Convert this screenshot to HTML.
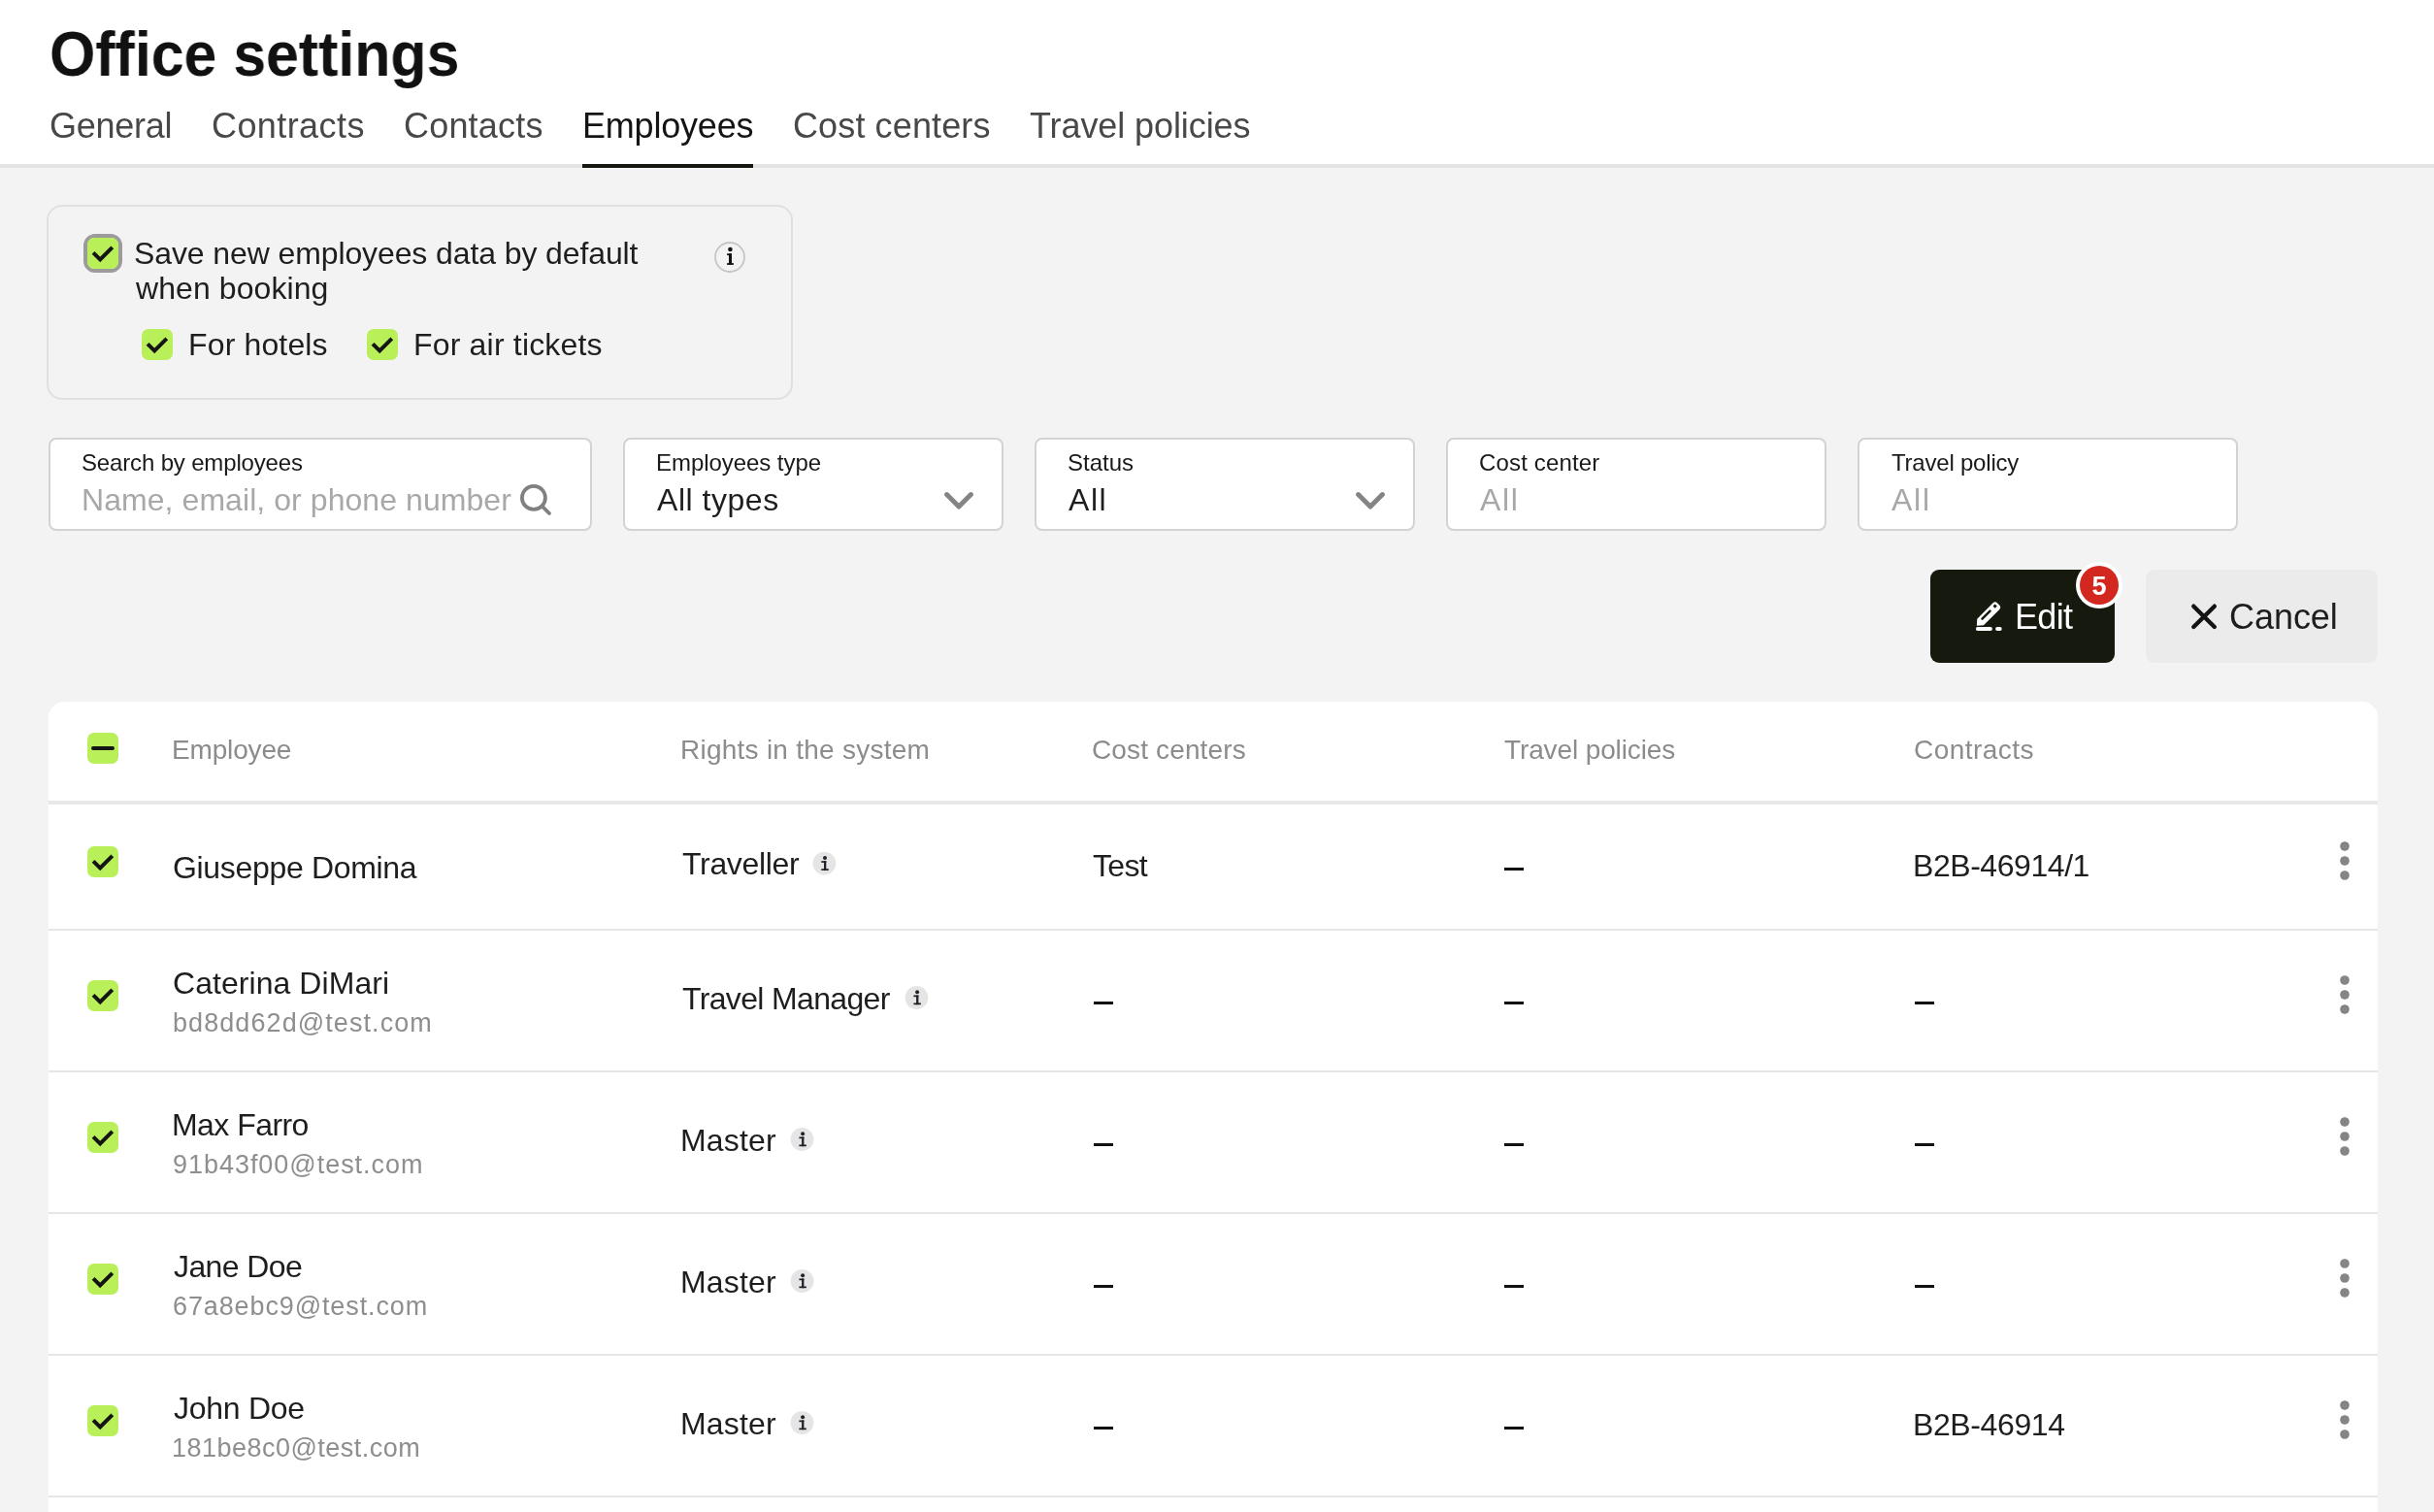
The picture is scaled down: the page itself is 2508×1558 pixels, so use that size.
<!DOCTYPE html>
<html><head><meta charset="utf-8"><style>
html,body{margin:0;padding:0;width:2508px;height:1558px;overflow:hidden;background:#f3f3f3;font-family:"Liberation Sans",sans-serif;}
.t{position:absolute;white-space:pre;font-family:"Liberation Sans",sans-serif;will-change:transform}
.a{position:absolute;box-sizing:border-box;}
svg{position:absolute;overflow:visible}
</style></head><body>
<div class=a style="left:0;top:0;width:2508px;height:169px;background:#fff"></div>
<div class=a style="left:0;top:169px;width:2508px;height:4px;background:#e3e3e3"></div>
<div class=a style="left:600px;top:169px;width:176px;height:4px;background:#141810"></div>
<div class=a style="left:48px;top:211px;width:769px;height:201px;border:2px solid #e0e0e0;border-radius:16px"></div>
<div class=a style="left:86px;top:241px;width:40px;height:40px;border:4px solid #9b9b9b;border-radius:12px"></div><svg style="left:90px;top:245px" width="32" height="32" viewBox="0 0 32 32"><rect width="32" height="32" rx="7" fill="#b9f05a"/><path d="M6.1 15.3 L13.2 22.4 L25.8 9.8" fill="none" stroke="#141414" stroke-width="3.9" stroke-linejoin="miter"/></svg>
<svg style="left:146px;top:339px" width="32" height="32" viewBox="0 0 32 32"><rect width="32" height="32" rx="7" fill="#b9f05a"/><path d="M6.1 15.3 L13.2 22.4 L25.8 9.8" fill="none" stroke="#141414" stroke-width="3.9" stroke-linejoin="miter"/></svg>
<svg style="left:378px;top:339px" width="32" height="32" viewBox="0 0 32 32"><rect width="32" height="32" rx="7" fill="#b9f05a"/><path d="M6.1 15.3 L13.2 22.4 L25.8 9.8" fill="none" stroke="#141414" stroke-width="3.9" stroke-linejoin="miter"/></svg>
<svg style="left:0;top:0" width="1" height="1"><circle cx="752" cy="265" r="15" fill="none" stroke="#c6c6c6" stroke-width="1.8"/><circle cx="752.4" cy="257" r="2.3" fill="#111"/><rect x="751" y="261.3" width="3" height="11" fill="#111"/><rect x="749.1" y="261.3" width="4.9" height="1.8" fill="#111"/><rect x="749.1" y="271.1" width="6.8" height="1.8" fill="#111"/></svg>
<div class=a style="left:50px;top:451px;width:560px;height:96px;background:#fff;border:2px solid #d3d3d3;border-radius:8px"></div>
<div class=a style="left:642px;top:451px;width:392px;height:96px;background:#fff;border:2px solid #d3d3d3;border-radius:8px"></div>
<div class=a style="left:1066px;top:451px;width:392px;height:96px;background:#fff;border:2px solid #d3d3d3;border-radius:8px"></div>
<div class=a style="left:1490px;top:451px;width:392px;height:96px;background:#fff;border:2px solid #d3d3d3;border-radius:8px"></div>
<div class=a style="left:1914px;top:451px;width:392px;height:96px;background:#fff;border:2px solid #d3d3d3;border-radius:8px"></div>
<svg style="left:0;top:0" width="1" height="1"><circle cx="549.9" cy="512.9" r="12" fill="none" stroke="#808080" stroke-width="3.8"/><path d="M558.6 521.6 L566 529" stroke="#808080" stroke-width="3.8" stroke-linecap="round"/></svg>
<svg style="left:0;top:0" width="1" height="1"><path d="M975.6 509.6 L988 522 L1000.4 509.6" fill="none" stroke="#848484" stroke-width="5" stroke-linecap="round" stroke-linejoin="round"/></svg>
<svg style="left:0;top:0" width="1" height="1"><path d="M1399.6 509.6 L1412 522 L1424.4 509.6" fill="none" stroke="#848484" stroke-width="5" stroke-linecap="round" stroke-linejoin="round"/></svg>
<div class=a style="left:1989px;top:587px;width:190px;height:96px;background:#161a0e;border-radius:9px"></div>
<div class=a style="left:2211px;top:587px;width:239px;height:96px;background:#ebebeb;border-radius:9px"></div>
<svg style="left:2025px;top:610px" width="50" height="50" viewBox="0 0 50 50"><g transform="translate(15.6 31) rotate(-45)"><path d="M0 -4.7 L22.8 -4.7 Q26.2 -4.7 26.2 -1.5 L26.2 1.5 Q26.2 4.7 22.8 4.7 L0 4.7 L-5.3 0 Z" fill="#fff"/><rect x="2.5" y="-2.3" width="13.8" height="2.5" rx="1.2" fill="#161a0e"/><rect x="20.8" y="-2.5" width="3" height="3" fill="#161a0e"/></g><rect x="10.9" y="36" width="17" height="4" rx="2" fill="#fff"/><rect x="31.1" y="36" width="6.6" height="4" rx="2" fill="#fff"/></svg>
<div class=a style="left:2139px;top:579px;width:48px;height:48px;border-radius:50%;background:#fff"></div>
<div class=a style="left:2143px;top:583px;width:40px;height:40px;border-radius:50%;background:#d3281f"></div>
<div class=t style="left:2143px;top:584px;width:40px;height:40px;line-height:40px;text-align:center;font-size:27px;font-weight:700;color:#fff">5</div>
<svg style="left:0;top:0" width="1" height="1"><path d="M2260.3 624.7 L2281.8 646 M2281.8 624.7 L2260.3 646" stroke="#141414" stroke-width="4.4" stroke-linecap="round"/></svg>
<div class=a style="left:50px;top:723px;width:2400px;height:900px;background:#fff;border-radius:16px"></div>
<div class=a style="left:50px;top:825px;width:2400px;height:4px;background:#e8e8e8"></div>
<div class=a style="left:50px;top:957.00px;width:2400px;height:2px;background:#e6e6e6"></div>
<div class=a style="left:50px;top:1103.00px;width:2400px;height:2px;background:#e6e6e6"></div>
<div class=a style="left:50px;top:1249.00px;width:2400px;height:2px;background:#e6e6e6"></div>
<div class=a style="left:50px;top:1395.00px;width:2400px;height:2px;background:#e6e6e6"></div>
<div class=a style="left:50px;top:1541.00px;width:2400px;height:2px;background:#e6e6e6"></div>
<svg style="left:90px;top:755px" width="32" height="32" viewBox="0 0 32 32"><rect width="32" height="32" rx="7" fill="#b9f05a"/><rect x="4" y="14.1" width="24" height="4" rx="2" fill="#141414"/></svg>
<svg style="left:90px;top:872px" width="32" height="32" viewBox="0 0 32 32"><rect width="32" height="32" rx="7" fill="#b9f05a"/><path d="M6.1 15.3 L13.2 22.4 L25.8 9.8" fill="none" stroke="#141414" stroke-width="3.9" stroke-linejoin="miter"/></svg>
<svg style="left:0;top:0" width="1" height="1"><circle cx="849.4" cy="889.7" r="11.9" fill="#e5e5e5"/><circle cx="850.0" cy="884.0" r="2" fill="#1e2127"/><rect x="849.0" y="887.2" width="2.3" height="9.7" fill="#1e2127"/><rect x="846.3" y="887.2" width="5" height="1.7" fill="#1e2127"/><rect x="846.3" y="895.2" width="7.5" height="1.7" fill="#1e2127"/></svg>
<div class=a style="left:1550.2px;top:894.10px;width:19.8px;height:2.8px;background:#111"></div>
<svg style="left:0;top:0" width="1" height="1"><circle cx="2416" cy="872" r="4.8" fill="#858585"/><circle cx="2416" cy="887" r="4.8" fill="#858585"/><circle cx="2416" cy="902" r="4.8" fill="#858585"/></svg>
<svg style="left:90px;top:1010px" width="32" height="32" viewBox="0 0 32 32"><rect width="32" height="32" rx="7" fill="#b9f05a"/><path d="M6.1 15.3 L13.2 22.4 L25.8 9.8" fill="none" stroke="#141414" stroke-width="3.9" stroke-linejoin="miter"/></svg>
<svg style="left:0;top:0" width="1" height="1"><circle cx="944.5" cy="1028" r="11.9" fill="#e5e5e5"/><circle cx="945.1" cy="1022.3" r="2" fill="#1e2127"/><rect x="944.1" y="1025.5" width="2.3" height="9.7" fill="#1e2127"/><rect x="941.4" y="1025.5" width="5" height="1.7" fill="#1e2127"/><rect x="941.4" y="1033.5" width="7.5" height="1.7" fill="#1e2127"/></svg>
<div class=a style="left:1127px;top:1032.05px;width:19.8px;height:2.8px;background:#111"></div>
<div class=a style="left:1550px;top:1032.05px;width:19.8px;height:2.8px;background:#111"></div>
<div class=a style="left:1973px;top:1032.05px;width:19.8px;height:2.8px;background:#111"></div>
<svg style="left:0;top:0" width="1" height="1"><circle cx="2416" cy="1010" r="4.8" fill="#858585"/><circle cx="2416" cy="1025" r="4.8" fill="#858585"/><circle cx="2416" cy="1040" r="4.8" fill="#858585"/></svg>
<svg style="left:90px;top:1156px" width="32" height="32" viewBox="0 0 32 32"><rect width="32" height="32" rx="7" fill="#b9f05a"/><path d="M6.1 15.3 L13.2 22.4 L25.8 9.8" fill="none" stroke="#141414" stroke-width="3.9" stroke-linejoin="miter"/></svg>
<svg style="left:0;top:0" width="1" height="1"><circle cx="826.5" cy="1174" r="11.9" fill="#e5e5e5"/><circle cx="827.1" cy="1168.3" r="2" fill="#1e2127"/><rect x="826.1" y="1171.5" width="2.3" height="9.7" fill="#1e2127"/><rect x="823.4" y="1171.5" width="5" height="1.7" fill="#1e2127"/><rect x="823.4" y="1179.5" width="7.5" height="1.7" fill="#1e2127"/></svg>
<div class=a style="left:1127px;top:1178.05px;width:19.8px;height:2.8px;background:#111"></div>
<div class=a style="left:1550px;top:1178.05px;width:19.8px;height:2.8px;background:#111"></div>
<div class=a style="left:1973px;top:1178.05px;width:19.8px;height:2.8px;background:#111"></div>
<svg style="left:0;top:0" width="1" height="1"><circle cx="2416" cy="1156" r="4.8" fill="#858585"/><circle cx="2416" cy="1171" r="4.8" fill="#858585"/><circle cx="2416" cy="1186" r="4.8" fill="#858585"/></svg>
<svg style="left:90px;top:1302px" width="32" height="32" viewBox="0 0 32 32"><rect width="32" height="32" rx="7" fill="#b9f05a"/><path d="M6.1 15.3 L13.2 22.4 L25.8 9.8" fill="none" stroke="#141414" stroke-width="3.9" stroke-linejoin="miter"/></svg>
<svg style="left:0;top:0" width="1" height="1"><circle cx="826.5" cy="1320" r="11.9" fill="#e5e5e5"/><circle cx="827.1" cy="1314.3" r="2" fill="#1e2127"/><rect x="826.1" y="1317.5" width="2.3" height="9.7" fill="#1e2127"/><rect x="823.4" y="1317.5" width="5" height="1.7" fill="#1e2127"/><rect x="823.4" y="1325.5" width="7.5" height="1.7" fill="#1e2127"/></svg>
<div class=a style="left:1127px;top:1324.05px;width:19.8px;height:2.8px;background:#111"></div>
<div class=a style="left:1550px;top:1324.05px;width:19.8px;height:2.8px;background:#111"></div>
<div class=a style="left:1973px;top:1324.05px;width:19.8px;height:2.8px;background:#111"></div>
<svg style="left:0;top:0" width="1" height="1"><circle cx="2416" cy="1302" r="4.8" fill="#858585"/><circle cx="2416" cy="1317" r="4.8" fill="#858585"/><circle cx="2416" cy="1332" r="4.8" fill="#858585"/></svg>
<svg style="left:90px;top:1448px" width="32" height="32" viewBox="0 0 32 32"><rect width="32" height="32" rx="7" fill="#b9f05a"/><path d="M6.1 15.3 L13.2 22.4 L25.8 9.8" fill="none" stroke="#141414" stroke-width="3.9" stroke-linejoin="miter"/></svg>
<svg style="left:0;top:0" width="1" height="1"><circle cx="826.5" cy="1466" r="11.9" fill="#e5e5e5"/><circle cx="827.1" cy="1460.3" r="2" fill="#1e2127"/><rect x="826.1" y="1463.5" width="2.3" height="9.7" fill="#1e2127"/><rect x="823.4" y="1463.5" width="5" height="1.7" fill="#1e2127"/><rect x="823.4" y="1471.5" width="7.5" height="1.7" fill="#1e2127"/></svg>
<div class=a style="left:1127px;top:1470.05px;width:19.8px;height:2.8px;background:#111"></div>
<div class=a style="left:1550px;top:1470.05px;width:19.8px;height:2.8px;background:#111"></div>
<svg style="left:0;top:0" width="1" height="1"><circle cx="2416" cy="1448" r="4.8" fill="#858585"/><circle cx="2416" cy="1463" r="4.8" fill="#858585"/><circle cx="2416" cy="1478" r="4.8" fill="#858585"/></svg>
<div class=t style="left:50.90px;top:24.00px;font-size:64px;line-height:64px;font-weight:700;color:#111111;transform:scaleX(0.9501);transform-origin:0 0">Office settings</div>
<div class=t style="left:51.00px;top:111.50px;font-size:36px;line-height:36px;font-weight:400;color:#484848;letter-spacing:-0.263px">General</div>
<div class=t style="left:217.60px;top:111.50px;font-size:36px;line-height:36px;font-weight:400;color:#484848;letter-spacing:0.418px">Contracts</div>
<div class=t style="left:415.60px;top:111.50px;font-size:36px;line-height:36px;font-weight:400;color:#484848;letter-spacing:0.191px">Contacts</div>
<div class=t style="left:599.50px;top:111.50px;font-size:36px;line-height:36px;font-weight:400;color:#141414;letter-spacing:-0.198px">Employees</div>
<div class=t style="left:816.60px;top:111.50px;font-size:36px;line-height:36px;font-weight:400;color:#484848;letter-spacing:0.120px">Cost centers</div>
<div class=t style="left:1061.00px;top:111.50px;font-size:36px;line-height:36px;font-weight:400;color:#484848;letter-spacing:-0.089px">Travel policies</div>
<div class=t style="left:138.40px;top:245.00px;font-size:32px;line-height:32px;font-weight:400;color:#1e1e1e;letter-spacing:-0.106px">Save new employees data by default</div>
<div class=t style="left:140.40px;top:280.70px;font-size:32px;line-height:32px;font-weight:400;color:#1e1e1e;letter-spacing:0.083px">when booking</div>
<div class=t style="left:194.00px;top:339.30px;font-size:32px;line-height:32px;font-weight:400;color:#1e1e1e;letter-spacing:0.147px">For hotels</div>
<div class=t style="left:425.70px;top:339.30px;font-size:32px;line-height:32px;font-weight:400;color:#1e1e1e;letter-spacing:0.183px">For air tickets</div>
<div class=t style="left:84.00px;top:465.20px;font-size:24px;line-height:24px;font-weight:400;color:#1a1a1a;letter-spacing:-0.155px">Search by employees</div>
<div class=t style="left:676.30px;top:465.20px;font-size:24px;line-height:24px;font-weight:400;color:#1a1a1a;letter-spacing:-0.054px">Employees type</div>
<div class=t style="left:1100.00px;top:465.20px;font-size:24px;line-height:24px;font-weight:400;color:#1a1a1a;letter-spacing:-0.008px">Status</div>
<div class=t style="left:1523.90px;top:465.20px;font-size:24px;line-height:24px;font-weight:400;color:#1a1a1a;letter-spacing:0.157px">Cost center</div>
<div class=t style="left:1948.70px;top:465.20px;font-size:24px;line-height:24px;font-weight:400;color:#1a1a1a;letter-spacing:-0.210px">Travel policy</div>
<div class=t style="left:83.60px;top:499.00px;font-size:32px;line-height:32px;font-weight:400;color:#a8a8a8;letter-spacing:0.065px">Name, email, or phone number</div>
<div class=t style="left:676.80px;top:499.00px;font-size:32px;line-height:32px;font-weight:400;color:#1e1e1e;letter-spacing:0.533px">All types</div>
<div class=t style="left:1101.00px;top:499.00px;font-size:32px;line-height:32px;font-weight:400;color:#1e1e1e;letter-spacing:1.573px">All</div>
<div class=t style="left:1524.90px;top:499.00px;font-size:32px;line-height:32px;font-weight:400;color:#a8a8a8;letter-spacing:1.623px">All</div>
<div class=t style="left:1948.70px;top:499.00px;font-size:32px;line-height:32px;font-weight:400;color:#a8a8a8;letter-spacing:1.723px">All</div>
<div class=t style="left:2075.50px;top:618.00px;font-size:36px;line-height:36px;font-weight:400;color:#ffffff;letter-spacing:-0.644px">Edit</div>
<div class=t style="left:2297.00px;top:618.00px;font-size:36px;line-height:36px;font-weight:400;color:#1e1e1e;letter-spacing:-0.052px">Cancel</div>
<div class=t style="left:177.00px;top:759.00px;font-size:28px;line-height:28px;font-weight:400;color:#8c8c8c;letter-spacing:-0.162px">Employee</div>
<div class=t style="left:700.90px;top:759.00px;font-size:28px;line-height:28px;font-weight:400;color:#8c8c8c;letter-spacing:0.249px">Rights in the system</div>
<div class=t style="left:1125.30px;top:759.00px;font-size:28px;line-height:28px;font-weight:400;color:#8c8c8c;letter-spacing:0.139px">Cost centers</div>
<div class=t style="left:1549.70px;top:759.00px;font-size:28px;line-height:28px;font-weight:400;color:#8c8c8c;letter-spacing:-0.122px">Travel policies</div>
<div class=t style="left:1972.40px;top:759.00px;font-size:28px;line-height:28px;font-weight:400;color:#8c8c8c;letter-spacing:0.472px">Contracts</div>
<div class=t style="left:178.00px;top:877.80px;font-size:32px;line-height:32px;font-weight:400;color:#1e1e1e;letter-spacing:-0.325px">Giuseppe Domina</div>
<div class=t style="left:702.90px;top:874.40px;font-size:32px;line-height:32px;font-weight:400;color:#1e1e1e;letter-spacing:-0.316px">Traveller</div>
<div class=t style="left:1126.30px;top:876.40px;font-size:32px;line-height:32px;font-weight:400;color:#1e1e1e;letter-spacing:-0.699px">Test</div>
<div class=t style="left:1971.40px;top:876.40px;font-size:32px;line-height:32px;font-weight:400;color:#1e1e1e;letter-spacing:-0.442px">B2B-46914/1</div>
<div class=t style="left:178.00px;top:997.10px;font-size:32px;line-height:32px;font-weight:400;color:#1e1e1e;letter-spacing:0.059px">Caterina DiMari</div>
<div class=t style="left:178.00px;top:1041.00px;font-size:27px;line-height:27px;font-weight:400;color:#8e8e8e;letter-spacing:1.077px">bd8dd62d@test.com</div>
<div class=t style="left:702.70px;top:1012.50px;font-size:32px;line-height:32px;font-weight:400;color:#1e1e1e;letter-spacing:-0.658px">Travel Manager</div>
<div class=t style="left:177.00px;top:1143.10px;font-size:32px;line-height:32px;font-weight:400;color:#1e1e1e;letter-spacing:-0.550px">Max Farro</div>
<div class=t style="left:178.00px;top:1187.00px;font-size:27px;line-height:27px;font-weight:400;color:#8e8e8e;letter-spacing:0.965px">91b43f00@test.com</div>
<div class=t style="left:700.70px;top:1158.50px;font-size:32px;line-height:32px;font-weight:400;color:#1e1e1e;letter-spacing:0.172px">Master</div>
<div class=t style="left:179.00px;top:1289.10px;font-size:32px;line-height:32px;font-weight:400;color:#1e1e1e;letter-spacing:-0.613px">Jane Doe</div>
<div class=t style="left:178.00px;top:1333.00px;font-size:27px;line-height:27px;font-weight:400;color:#8e8e8e;letter-spacing:0.884px">67a8ebc9@test.com</div>
<div class=t style="left:700.70px;top:1304.50px;font-size:32px;line-height:32px;font-weight:400;color:#1e1e1e;letter-spacing:0.172px">Master</div>
<div class=t style="left:179.00px;top:1435.10px;font-size:32px;line-height:32px;font-weight:400;color:#1e1e1e;letter-spacing:-0.270px">John Doe</div>
<div class=t style="left:177.00px;top:1479.00px;font-size:27px;line-height:27px;font-weight:400;color:#8e8e8e;letter-spacing:0.478px">181be8c0@test.com</div>
<div class=t style="left:700.70px;top:1450.50px;font-size:32px;line-height:32px;font-weight:400;color:#1e1e1e;letter-spacing:0.172px">Master</div>
<div class=t style="left:1970.80px;top:1452.40px;font-size:32px;line-height:32px;font-weight:400;color:#1e1e1e;letter-spacing:-0.391px">B2B-46914</div>
</body></html>
